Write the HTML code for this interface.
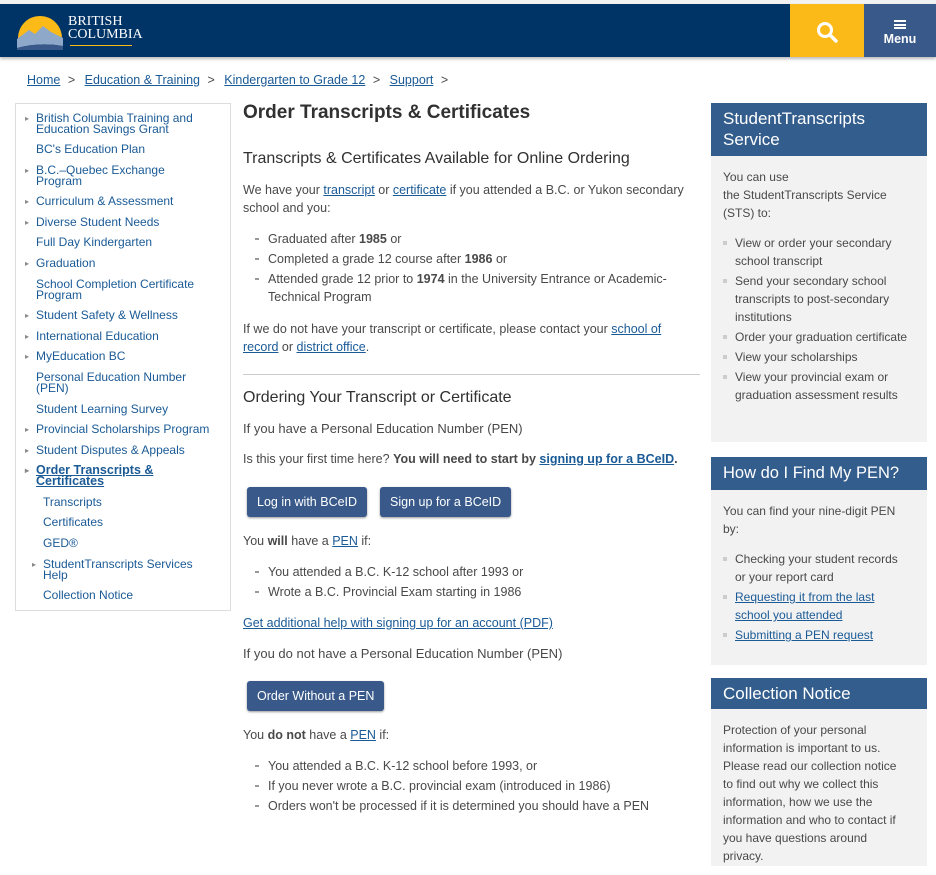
<!DOCTYPE html>
<html><head><meta charset="utf-8"><style>
*{margin:0;padding:0;box-sizing:border-box}
body{width:936px;height:866px;overflow:hidden;background:#fff;font-family:"Liberation Sans",sans-serif;color:#494949;font-size:12.5px;position:relative}
a{color:#1a5a96;text-decoration:underline}
.hdr{position:absolute;left:0;top:4px;width:936px;height:53px;background:#003366;box-shadow:0 2px 3px #bbb}
.top{position:absolute;left:0;top:0;width:936px;height:4px;background:#f2f2f2}
.srch{position:absolute;left:790px;top:4px;width:74px;height:53px;background:#fcba19}
.menu{position:absolute;left:864px;top:4px;width:72px;height:53px;background:#38598a;color:#fff;font-size:12.5px;font-weight:bold;text-align:center}
.bc{position:absolute;left:27px;top:73px;font-size:12.5px}
.bc a{color:#1a5a96;margin-right:4px}
.bc span{margin-right:6px}
.nav{position:absolute;left:15px;top:103px;width:216px;height:508px;border:1px solid #ddd}
.nav div{position:absolute;left:20px;color:#1a5a96;font-size:12px;line-height:11px}
.nav .ar:before{content:"▸";position:absolute;left:-11px;top:0;font-size:8px;color:#888}
.main{position:absolute;left:243px;top:100px;width:457px}
h1{font-size:19px;font-weight:bold;color:#313132;position:absolute;top:2px}
h2{font-size:16px;font-weight:normal;color:#313132;position:absolute}
.t{position:absolute;line-height:18px;font-size:12.5px}
ul.t{list-style:none}
ul.t li{position:relative;padding-left:25px;line-height:18px;margin-bottom:2px}
ul.t li:before{content:"";position:absolute;left:12px;top:8px;width:4px;height:2px;background:#999}
.btn{position:absolute;background:#38598a;color:#fff;font-size:12.5px;height:30px;line-height:30px;padding:0 10px;border-radius:3px;box-shadow:0 1px 2px #999}
.side{position:absolute;left:711px;width:216px;background:#f2f2f2}
.side .h{background:#335d8c;color:#fff;font-size:17px;padding:4px 12px;line-height:21px}
.side .b{padding:10px 18px 10px 12px;line-height:18px;font-size:12px;color:#494949}
.side ul{list-style:none;margin-top:12px}
.side li{position:relative;padding-left:12px;margin-bottom:2px}
.side li:before{content:"";position:absolute;left:0;top:7px;width:4px;height:4px;background:#ccc}
</style></head><body>
<div class="top"></div>
<div class="hdr">
<svg style="position:absolute;left:15px;top:8px" width="50" height="38" viewBox="0 0 50 38"><path d="M3 26 A22 22 0 0 1 47 26Z" fill="#fcba19"/><path d="M2 27 L14 18 L20 22 L28 14 L36 20 L48 26 L48 34 Q25 30 2 36Z" fill="#8da8c8"/><path d="M2 36 Q25 30 48 34 L48 38 L2 38Z" fill="#38598a"/></svg>
<div style="position:absolute;left:68px;top:11px;color:#fff;font-family:'Liberation Serif',serif;font-size:14px;line-height:13px">BRITISH<br>COLUMBIA</div>
<div style="position:absolute;left:70px;top:41px;width:62px;height:1px;background:#fcba19"></div>
</div>
<div class="srch"><svg style="position:absolute;left:26px;top:17px" width="22" height="22" viewBox="0 0 22 22"><circle cx="9" cy="9" r="6.5" fill="none" stroke="#fff" stroke-width="3"/><path d="M14 14 L20 20" stroke="#fff" stroke-width="3.5" stroke-linecap="round"/></svg></div>
<div class="menu"><div style="margin:16px auto 3px;width:12px;height:9px;border-top:2px solid #fff;border-bottom:2px solid #fff;position:relative"><div style="position:absolute;top:1.5px;left:0;width:12px;height:2px;background:#fff"></div></div>Menu</div>
<div class="bc"><a>Home</a> <span>&gt;</span> <a>Education &amp; Training</a> <span>&gt;</span> <a>Kindergarten to Grade 12</a> <span>&gt;</span> <a>Support</a> <span>&gt;</span></div>

<div class="nav">
<div class="ar" style="top:9px">British Columbia Training and<br>Education Savings Grant</div>
<div style="top:40px">BC's Education Plan</div>
<div class="ar" style="top:61px">B.C.–Quebec Exchange<br>Program</div>
<div class="ar" style="top:92px">Curriculum &amp; Assessment</div>
<div class="ar" style="top:113px">Diverse Student Needs</div>
<div style="top:133px">Full Day Kindergarten</div>
<div class="ar" style="top:154px">Graduation</div>
<div style="top:175px">School Completion Certificate<br>Program</div>
<div class="ar" style="top:206px">Student Safety &amp; Wellness</div>
<div class="ar" style="top:227px">International Education</div>
<div class="ar" style="top:247px">MyEducation BC</div>
<div style="top:268px">Personal Education Number<br>(PEN)</div>
<div style="top:300px">Student Learning Survey</div>
<div class="ar" style="top:320px">Provincial Scholarships Program</div>
<div class="ar" style="top:341px">Student Disputes &amp; Appeals</div>
<div class="ar" style="top:361px;font-weight:bold;text-decoration:underline;font-size:12.5px">Order Transcripts &amp;<br>Certificates</div>
<div style="top:393px;left:27px">Transcripts</div>
<div style="top:413px;left:27px">Certificates</div>
<div style="top:434px;left:27px">GED®</div>
<div class="ar" style="top:455px;left:27px">StudentTranscripts Services<br>Help</div>
<div style="top:486px;left:27px">Collection Notice</div>
</div>

<div class="main">
<h1>Order Transcripts &amp; Certificates</h1>
<h2 style="top:50px">Transcripts &amp; Certificates Available for Online Ordering</h2>
<div class="t" style="top:81px">We have your <a>transcript</a> or <a>certificate</a> if you attended a B.C. or Yukon secondary school and you:</div>
<ul class="t" style="top:130px;width:440px"><li>Graduated after <b>1985</b> or</li><li>Completed a grade 12 course after <b>1986</b> or</li><li>Attended grade 12 prior to <b>1974</b> in the University Entrance or Academic-Technical Program</li></ul>
<div class="t" style="top:220px">If we do not have your transcript or certificate, please contact your <a>school of record</a> or <a>district office</a>.</div>
<div style="position:absolute;top:274px;left:0;width:457px;height:1px;background:#ccc"></div>
<h2 style="top:289px">Ordering Your Transcript or Certificate</h2>
<div class="t" style="top:320px;font-size:13px">If you have a Personal Education Number (PEN)</div>
<div class="t" style="top:350px;white-space:nowrap">Is this your first time here? <b>You will need to start by <a>signing up for a BCeID</a>.</b></div>
<div class="btn" style="top:387px;left:4px">Log in with BCeID</div>
<div class="btn" style="top:387px;left:137px">Sign up for a BCeID</div>
<div class="t" style="top:432px">You <b>will</b> have a <a>PEN</a> if:</div>
<ul class="t" style="top:463px"><li>You attended a B.C. K-12 school after 1993 or</li><li>Wrote a B.C. Provincial Exam starting in 1986</li></ul>
<div class="t" style="top:514px"><a>Get additional help with signing up for an account (PDF)</a></div>
<div class="t" style="top:545px;font-size:13px">If you do not have a Personal Education Number (PEN)</div>
<div class="btn" style="top:581px;left:4px">Order Without a PEN</div>
<div class="t" style="top:626px">You <b>do not</b> have a <a>PEN</a> if:</div>
<ul class="t" style="top:657px"><li>You attended a B.C. K-12 school before 1993, or</li><li>If you never wrote a B.C. provincial exam (introduced in 1986)</li><li>Orders won't be processed if it is determined you should have a PEN</li></ul>
</div>

<div class="side" style="top:103px;height:339px"><div class="h" style="padding:5px 12px 6px">StudentTranscripts<br>Service</div><div class="b" style="padding-top:12px">You can use<br>the StudentTranscripts Service (STS) to:
<ul><li>View or order your secondary school transcript</li><li>Send your secondary school transcripts to post-secondary institutions</li><li>Order your graduation certificate</li><li>View your scholarships</li><li>View your provincial exam or graduation assessment results</li></ul></div></div>
<div class="side" style="top:457px;height:208px"><div class="h" style="padding:6px 8px 6px 12px;font-size:16.5px;white-space:nowrap">How do I Find My PEN?</div><div class="b" style="padding-top:12px">You can find your nine-digit PEN by:
<ul><li>Checking your student records or your report card</li><li><a>Requesting it from the last school you attended</a></li><li><a>Submitting a PEN request</a></li></ul></div></div>
<div class="side" style="top:678px;height:188px"><div class="h" style="padding:5px 12px">Collection Notice</div><div class="b" style="padding-top:12px">Protection of your personal information is important to us. Please read our collection notice to find out why we collect this information, how we use the information and who to contact if you have questions around privacy.</div></div>
</body></html>
